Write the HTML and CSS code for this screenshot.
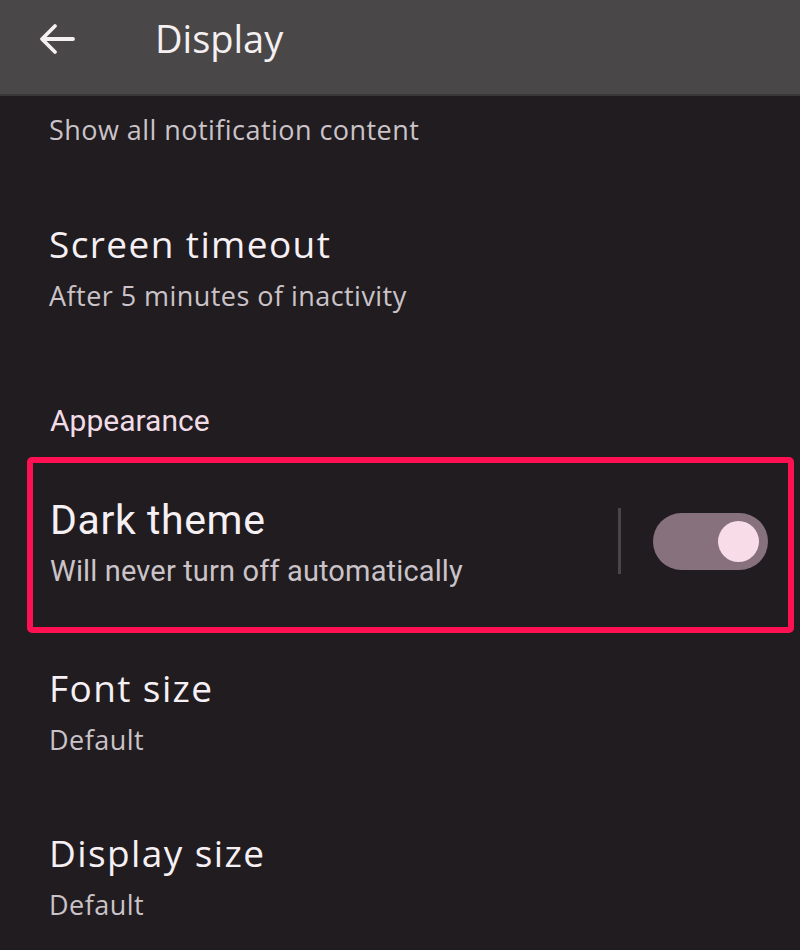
FILE: index.html
```html
<!DOCTYPE html>
<html lang="en">
<head>
    <meta charset="UTF-8">
    <title>Display</title>
    <link rel="stylesheet" href="styles.css">
</head>
<body>

<div class="topbar">
    <button class="back" aria-label="Back">
        <svg width="36" height="32" viewBox="0 0 36 32">
            <path d="M34 16H4M16 3L3 16l13 13" fill="none" stroke="#f4f0f2" stroke-width="3.8" stroke-linecap="round" stroke-linejoin="round"/>
        </svg>
    </button>
    <h1>Display</h1>
</div>

<div class="list">
    <div class="row row-top">
        <div class="sub">Show all notification content</div>
    </div>

    <div class="row row-timeout">
        <div class="title">Screen timeout</div>
        <div class="sub">After 5 minutes of inactivity</div>
    </div>

    <div class="category">Appearance</div>

    <div class="row row-switch highlight">
        <div class="text roboto">
            <div class="title">Dark theme</div>
            <div class="sub">Will never turn off automatically</div>
        </div>
        <div class="divider"></div>
        <div class="switch on"><span class="thumb"></span></div>
    </div>

    <div class="row row-font">
        <div class="title">Font size</div>
        <div class="sub">Default</div>
    </div>

    <div class="row row-display">
        <div class="title">Display size</div>
        <div class="sub">Default</div>
    </div>
</div>

</body>
</html>
```

FILE: styles.css
```css
body { margin: 0; background: #201c20; font-family: "Open Sans", sans-serif; color: #f4eef2; overflow: hidden; }

.topbar { height: 94px; background: #4a4748; border-bottom: 2px solid #3b383a; display: flex; align-items: flex-start; }
.back { background: none; border: none; padding: 0; margin: 23px 0 0 39px; width: 36px; height: 32px; }
.back svg { display: block; }
.topbar h1 { margin: 16px 0 0 80px; font-weight: 400; font-size: 38px; line-height: 44px; color: #f4f0f2; }

.list { display: flex; flex-direction: column; }
.row { padding: 0 49px; box-sizing: border-box; }

.title { font-size: 37px; line-height: 44px; letter-spacing: 1.4px; color: #f6f0f4; }
.sub { font-size: 27px; line-height: 36px; letter-spacing: 0.45px; color: #cbc3c8; }
.row .title + .sub { margin-top: 12px; }

.row-top { height: 126px; padding-top: 16px; }
.row-timeout { height: 181px; }
.category { padding: 0 50px; height: 54px; font-family: Roboto, sans-serif; font-size: 30px; line-height: 36px; color: #f1dce6; }

/* highlighted preference with its switch */
.highlight { margin: 0 6px 0 27px; border: 6px solid #ff1053; border-radius: 5px; height: 176px; padding: 0 20px 0 17px; }
.row-switch { display: flex; align-items: center; }
.row-switch .text { flex: 1; margin-top: -5px; }
.roboto { font-family: Roboto, sans-serif; }
.roboto .title { font-size: 41px; line-height: 48px; letter-spacing: 0.6px; }
.roboto .sub { font-size: 29px; line-height: 36px; letter-spacing: 0.15px; }
.roboto .title + .sub { margin-top: 9px; }

.divider { width: 3px; height: 66px; background: #4a4549; margin: -8px 32px 0 0; }
.switch { width: 115px; height: 57px; margin-top: -7px; border-radius: 29px; background: #87717d; position: relative; }
.switch .thumb { position: absolute; right: 9px; top: 8px; width: 41px; height: 41px; border-radius: 50%; background: #f8dde9; }

.row-font { height: 198px; padding-top: 33px; }
.row-display { padding-top: 0; }
```
